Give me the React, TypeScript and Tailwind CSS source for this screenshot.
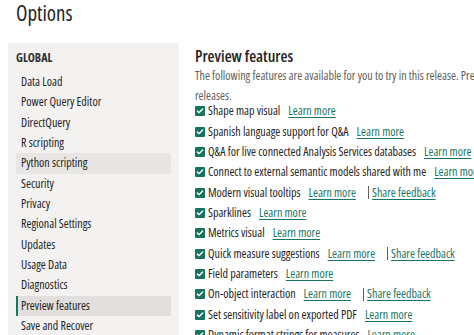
import { Check } from 'lucide-react';

type Feature = { label: string; feedback?: boolean };

const navItems = [
  'Data Load',
  'Power Query Editor',
  'DirectQuery',
  'R scripting',
  'Python scripting',
  'Security',
  'Privacy',
  'Regional Settings',
  'Updates',
  'Usage Data',
  'Diagnostics',
  'Preview features',
  'Save and Recover',
];

const features: Feature[] = [
  { label: 'Shape map visual' },
  { label: 'Spanish language support for Q&A' },
  { label: 'Q&A for live connected Analysis Services databases' },
  { label: 'Connect to external semantic models shared with me' },
  { label: 'Modern visual tooltips', feedback: true },
  { label: 'Sparklines' },
  { label: 'Metrics visual' },
  { label: 'Quick measure suggestions', feedback: true },
  { label: 'Field parameters' },
  { label: 'On-object interaction', feedback: true },
  { label: 'Set sensitivity label on exported PDF' },
  { label: 'Dynamic format strings for measures' },
];

export default function App() {
  return (
    <div className="h-[335px] w-[474px] overflow-hidden bg-white font-['Open_Sans',sans-serif] [font-stretch:75%] text-[#252423]">
      <h1 className="h-[43px] pl-4 text-[21px] leading-[26px]">Options</h1>

      <div className="flex">
        {/* Sidebar */}
        <div className="ml-2 h-[300px] w-[171px] shrink-0 bg-[#f3f2f1] px-2 pt-[5px]">
          <div className="text-[12px] font-bold leading-[20px] text-[#323130]">GLOBAL</div>
          <div className="mt-[4px]">
            {navItems.map(item => {
              const selected = item === 'Preview features';
              const hover = item === 'Python scripting';
              return (
                <div
                  key={item}
                  className={`relative h-[20.35px] whitespace-nowrap pl-[5px] text-[12px] leading-[20.35px] ${
                    selected ? 'bg-[#e1dfdd]' : hover ? 'bg-[#e8e6e4]' : ''
                  }`}
                >
                  {selected && <span className="absolute left-0 top-0 h-full w-[2px] bg-[#117865]" />}
                  {item}
                </div>
              );
            })}
          </div>
        </div>

        {/* Content */}
        <div className="ml-4 min-w-0 flex-1 overflow-hidden">
          <h2 className="mt-[3px] whitespace-nowrap text-[16px] font-semibold leading-[20px]">Preview features</h2>
          <p className="whitespace-nowrap text-[12px] leading-[20px] text-[#605e5c]">
            The following features are available for you to try in this release. Preview features might change or be removed in future
            <br />
            releases.
          </p>
          <div className="-mt-[5px]">
            {features.map(f => (
              <div key={f.label} className="flex h-[20.36px] items-center whitespace-nowrap text-[12px]">
                <span className="mr-[3px] flex h-[10px] w-[10px] shrink-0 items-center justify-center rounded-[1px] bg-[#16735f]">
                  <Check className="h-[8px] w-[8px] text-white" strokeWidth={4} />
                </span>
                <span>{f.label}</span>
                <a className="ml-[8px] text-[#1a7566] underline underline-offset-2" href="#">Learn more</a>
                {f.feedback && (
                  <>
                    <span className="ml-[12px] mr-[3px] h-[13px] w-[1px] bg-[#605e5c]" />
                    <a className="text-[#1a7566] underline underline-offset-2" href="#">Share feedback</a>
                  </>
                )}
              </div>
            ))}
          </div>
        </div>
      </div>
    </div>
  );
}
